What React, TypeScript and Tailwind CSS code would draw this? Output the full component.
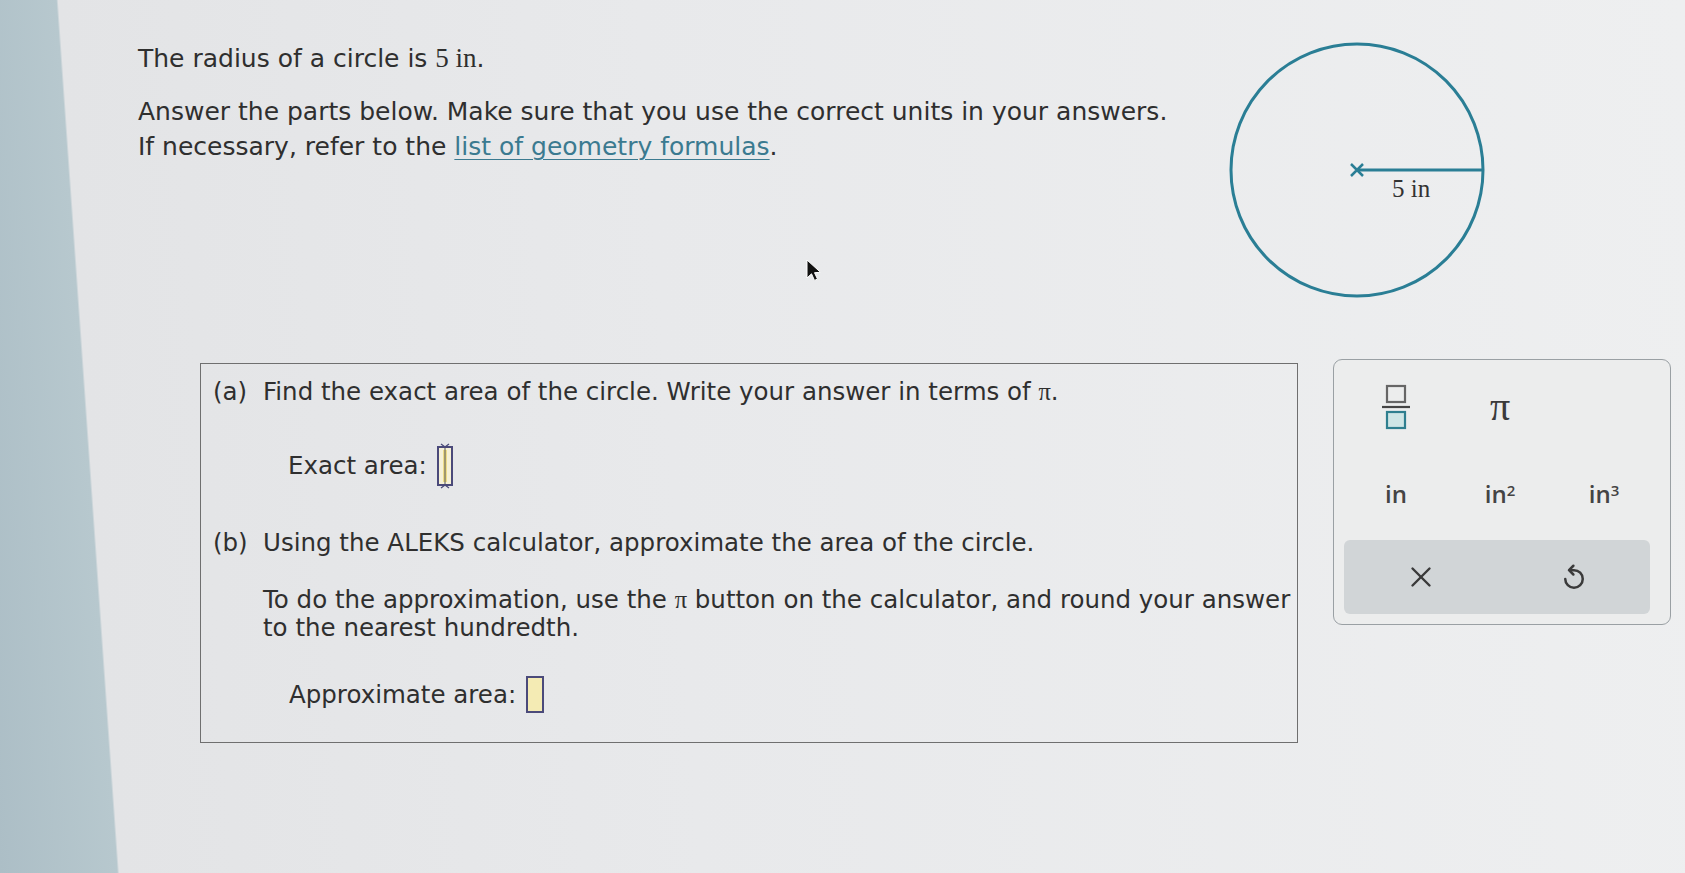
import { X } from "lucide-react";

const sans = "font-['DejaVu_Sans',Verdana,sans-serif]";
const serif = "font-['Liberation_Serif','Times_New_Roman',serif]";

const FractionIcon = () => (
    <svg width="30" height="46" viewBox="0 0 30 46">
        <rect x="6" y="2" width="18" height="16" fill="none" stroke="#666" strokeWidth="2.2" />
        <line x1="1" y1="23" x2="29" y2="23" stroke="#444" strokeWidth="2.2" />
        <rect x="6" y="28" width="18" height="16" fill="#cfe6e6" stroke="#2f7f8f" strokeWidth="2.2" />
    </svg>
);

const UndoIcon = () => (
    <svg width="30" height="30" viewBox="0 0 24 24" fill="none" stroke="#3a3a3a" strokeWidth="2" strokeLinecap="round" strokeLinejoin="round">
        <path d="M9 6.5h3a7 7 0 1 1-7 7" />
        <path d="M11.5 3 8 6.5l3.5 3.5" />
    </svg>
);

const FocusedInput = () => (
    <svg width="20" height="46" viewBox="0 0 20 46">
        <path d="M6 1l4 3 4-3" fill="none" stroke="#4a4a78" strokeWidth="1.3" />
        <rect x="3" y="4" width="14" height="38" fill="#f6f1d6" stroke="#4b4a7a" strokeWidth="2" />
        <rect x="8" y="7" width="4" height="32" fill="#eddc86" />
        <line x1="10" y1="5" x2="10" y2="41" stroke="#555" strokeWidth="1" />
        <path d="M6 45l4-3 4 3" fill="none" stroke="#4a4a78" strokeWidth="1.3" />
    </svg>
);

const App = () => {
    return (
        <div className={`relative min-h-[873px] w-[1685px] overflow-hidden bg-[linear-gradient(86deg,#acbec6_0px,#b7c8ce_117px,#e3e4e6_119px,#e8e9eb_700px,#eeeff0_100%)] text-[#2f2f2f] ${sans}`}>
            <div className="flex pt-[39px]">
                <div className="w-[1226px] shrink-0 pl-[138px] pt-[2px]">
                    <p className="text-[25px] leading-[35px] whitespace-nowrap">
                        The radius of a circle is <span className={`${serif} text-[27px]`}>5 in</span>.
                    </p>
                    <p className="mt-[18px] text-[25px] leading-[35px] whitespace-nowrap">
                        Answer the parts below. Make sure that you use the correct units in your answers.
                        <br />
                        If necessary, refer to the <span className="text-[#3b7a90] underline underline-offset-4 decoration-1">list of geometry formulas</span>.
                    </p>
                </div>
                <svg width="262" height="262" viewBox="0 0 262 262" className="shrink-0">
                    <circle cx="131" cy="131" r="126" fill="none" stroke="#2a7e95" strokeWidth="3" />
                    <line x1="131" y1="131" x2="257" y2="131" stroke="#2a7e95" strokeWidth="3" />
                    <path d="M125 125l12 12M137 125l-12 12" stroke="#2a7e95" strokeWidth="2.5" />
                    <text x="166" y="158" fontFamily="'Liberation Serif', serif" fontSize="25" fill="#333">5 in</text>
                </svg>
            </div>

            <div className="mt-[58px] flex items-start pl-[200px]">
                <div className="mt-[4px] h-[380px] w-[1098px] border-[1.5px] border-[#6f6f6f] px-[12px] pt-[14px] text-[24.5px] leading-[28px]">
                    <div className="flex">
                        <span className="w-[50px] shrink-0">(a)</span>
                        <div>
                            <p>Find the exact area of the circle. Write your answer in terms of <span className={serif}>π</span>.</p>
                            <div className="mt-[37px] flex items-center pl-[25px]">
                                <span>Exact area:</span>
                                <span className="ml-[8px]"><FocusedInput /></span>
                            </div>
                        </div>
                    </div>
                    <div className="mt-[40px] flex">
                        <span className="w-[50px] shrink-0">(b)</span>
                        <div>
                            <p className="whitespace-nowrap">Using the ALEKS calculator, approximate the area of the circle.</p>
                            <p className="mt-[29px] whitespace-nowrap">
                                To do the approximation, use the <span className={serif}>π</span> button on the calculator, and round your answer
                                <br />
                                to the nearest hundredth.
                            </p>
                            <div className="mt-[34px] flex items-center pl-[26px]">
                                <span>Approximate area:</span>
                                <span className="ml-[10px] h-[37px] w-[18px] border-2 border-[#4b4a7a] bg-[#f4ebb4]"></span>
                            </div>
                        </div>
                    </div>
                </div>

                <div className="ml-[35px] h-[266px] w-[338px] rounded-[9px] border-[1.5px] border-[#9aa0a4] bg-[#eceded] pb-[10px]">
                    <div className="mt-[13px] grid h-[68px] grid-cols-[104px_104px_104px] items-center justify-items-center px-[10px]">
                        <FractionIcon />
                        <span className={`${serif} text-[40px] leading-none text-[#3a3a3a]`}>π</span>
                        <span></span>
                    </div>
                    <div className="mt-[19px] grid h-[68px] grid-cols-[104px_104px_104px] items-center justify-items-center px-[10px] font-['Open_Sans',sans-serif] text-[24px] font-semibold text-[#444]">
                        <span>in</span>
                        <span>in<sup className="text-[15px]">2</sup></span>
                        <span>in<sup className="text-[15px]">3</sup></span>
                    </div>
                    <div className="mt-[12px] ml-[10px] mr-[20px] grid h-[74px] grid-cols-2 items-center justify-items-center rounded-[6px] bg-[#d1d5d7]">
                        <X size={34} strokeWidth={1.7} color="#3a3a3a" />
                        <UndoIcon />
                    </div>
                </div>
            </div>

            <svg width="16" height="24" viewBox="0 0 16 24" className="absolute left-[806px] top-[259px]">
                <path d="M1 1v18l4.5-4.2 3 6.6 3-1.3-3-6.4 6-.4z" fill="#111" stroke="#fff" strokeWidth="1" />
            </svg>
        </div>
    );
};

export default App;
